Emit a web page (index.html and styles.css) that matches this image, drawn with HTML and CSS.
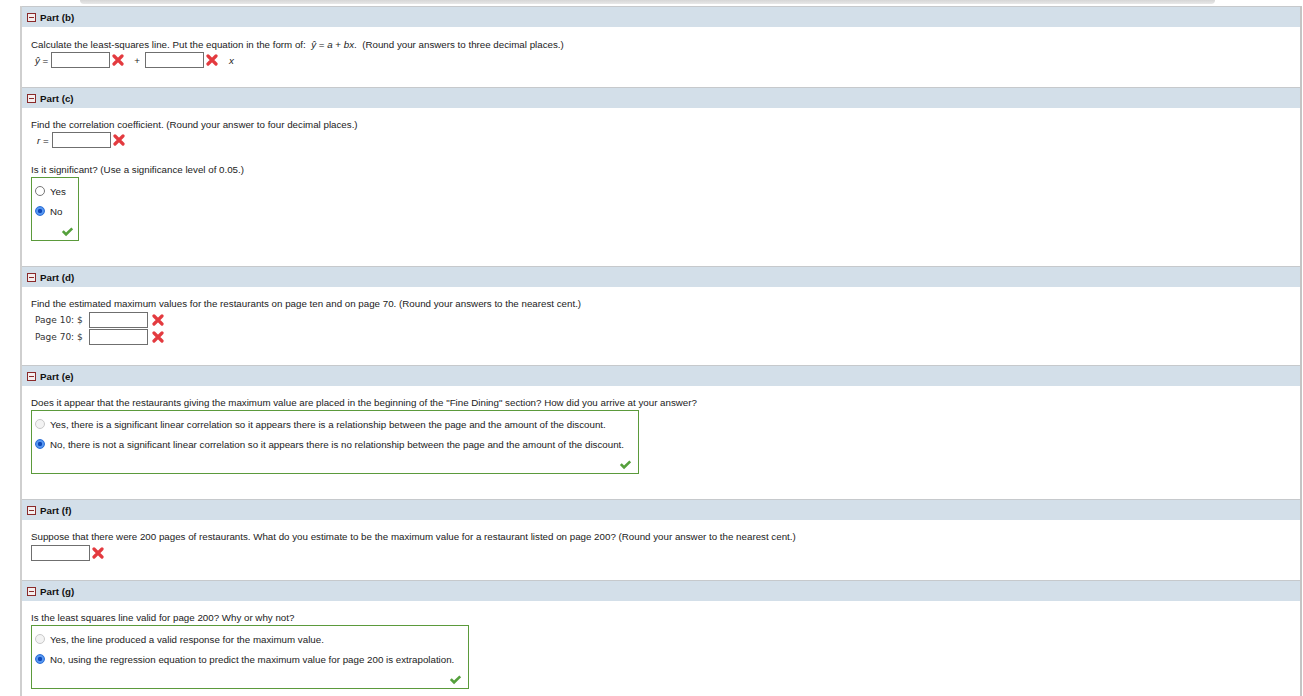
FILE: index.html
```html
<!DOCTYPE html>
<html lang="en">
<head>
    <meta charset="UTF-8">
    <title>Homework Parts</title>
    <link rel="stylesheet" href="styles.css">
</head>
<body>

    <div class="top-shadow"></div>

    <div class="parts">

        <!-- Part (b) -->
        <div class="part">
            <div class="part-header"><span class="toggle-box"></span>Part (b)</div>
            <div class="part-body first">
                <p class="question">Calculate the least-squares line. Put the equation in the form of:&nbsp; <i>ŷ</i> = <i>a</i> + <i>bx</i>.&nbsp; (Round your answers to three decimal places.)</p>
                <div class="answer-row indent-sm">
                    <span class="math-label"><i>ŷ</i> =</span>
                    <input type="text" class="answer-input">
                    <svg class="wrong" viewBox="0 0 12 12"><path d="M2 2 L10 10 M10 2 L2 10"/></svg>
                    <span class="plus">+</span>
                    <input type="text" class="answer-input">
                    <svg class="wrong" viewBox="0 0 12 12"><path d="M2 2 L10 10 M10 2 L2 10"/></svg>
                    <span class="var-x"><i>x</i></span>
                </div>
            </div>
        </div>

        <!-- Part (c) -->
        <div class="part">
            <div class="part-header"><span class="toggle-box"></span>Part (c)</div>
            <div class="part-body has-box">
                <p class="question">Find the correlation coefficient. (Round your answer to four decimal places.)</p>
                <div class="answer-row indent-md">
                    <span class="math-label"><i>r</i> =</span>
                    <input type="text" class="answer-input">
                    <svg class="wrong" viewBox="0 0 12 12"><path d="M2 2 L10 10 M10 2 L2 10"/></svg>
                </div>
                <p class="question spaced">Is it significant? (Use a significance level of 0.05.)</p>
                <div class="choice-box narrow">
                    <label class="choice"><input type="radio" name="sig" class="radio"> Yes</label>
                    <label class="choice"><input type="radio" name="sig" class="radio" checked> No</label>
                    <div class="check-row">
                        <svg class="right" viewBox="0 0 14 11"><path d="M0.8 5.6 L2.9 3.6 L5.4 6 L11.2 0.6 L13.2 2.6 L5.4 10.2 Z"/></svg>
                    </div>
                </div>
            </div>
        </div>

        <!-- Part (d) -->
        <div class="part">
            <div class="part-header"><span class="toggle-box"></span>Part (d)</div>
            <div class="part-body">
                <p class="question">Find the estimated maximum values for the restaurants on page ten and on page 70. (Round your answers to the nearest cent.)</p>
                <div class="answer-row indent-sm page-row">
                    <span class="page-label">Page 10: $</span>
                    <input type="text" class="answer-input">
                    <svg class="wrong wide-gap" viewBox="0 0 12 12"><path d="M2 2 L10 10 M10 2 L2 10"/></svg>
                </div>
                <div class="answer-row indent-sm page-row">
                    <span class="page-label">Page 70: $</span>
                    <input type="text" class="answer-input">
                    <svg class="wrong wide-gap" viewBox="0 0 12 12"><path d="M2 2 L10 10 M10 2 L2 10"/></svg>
                </div>
            </div>
        </div>

        <!-- Part (e) -->
        <div class="part">
            <div class="part-header"><span class="toggle-box"></span>Part (e)</div>
            <div class="part-body has-box">
                <p class="question">Does it appear that the restaurants giving the maximum value are placed in the beginning of the "Fine Dining" section? How did you arrive at your answer?</p>
                <div class="choice-box">
                    <label class="choice"><input type="radio" name="fine" class="radio" disabled> Yes, there is a significant linear correlation so it appears there is a relationship between the page and the amount of the discount.</label>
                    <label class="choice"><input type="radio" name="fine" class="radio" checked> No, there is not a significant linear correlation so it appears there is no relationship between the page and the amount of the discount.</label>
                    <div class="check-row">
                        <svg class="right" viewBox="0 0 14 11"><path d="M0.8 5.6 L2.9 3.6 L5.4 6 L11.2 0.6 L13.2 2.6 L5.4 10.2 Z"/></svg>
                    </div>
                </div>
            </div>
        </div>

        <!-- Part (f) -->
        <div class="part">
            <div class="part-header"><span class="toggle-box"></span>Part (f)</div>
            <div class="part-body short">
                <p class="question">Suppose that there were 200 pages of restaurants. What do you estimate to be the maximum value for a restaurant listed on page 200? (Round your answer to the nearest cent.)</p>
                <div class="answer-row page-row">
                    <input type="text" class="answer-input">
                    <svg class="wrong" viewBox="0 0 12 12"><path d="M2 2 L10 10 M10 2 L2 10"/></svg>
                </div>
            </div>
        </div>

        <!-- Part (g) -->
        <div class="part">
            <div class="part-header"><span class="toggle-box"></span>Part (g)</div>
            <div class="part-body has-box">
                <p class="question">Is the least squares line valid for page 200? Why or why not?</p>
                <div class="choice-box">
                    <label class="choice"><input type="radio" name="valid" class="radio" disabled> Yes, the line produced a valid response for the maximum value.</label>
                    <label class="choice"><input type="radio" name="valid" class="radio" checked> No, using the regression equation to predict the maximum value for page 200 is extrapolation.</label>
                    <div class="check-row">
                        <svg class="right" viewBox="0 0 14 11"><path d="M0.8 5.6 L2.9 3.6 L5.4 6 L11.2 0.6 L13.2 2.6 L5.4 10.2 Z"/></svg>
                    </div>
                </div>
            </div>
        </div>

    </div>

</body>
</html>
```

FILE: styles.css
```css
* {
    margin: 0;
    padding: 0;
    box-sizing: border-box;
}

body {
    font-family: 'Liberation Sans', Arial, sans-serif;
    font-size: 9.75px;
    color: #222;
    background-color: white;
    padding: 0 1px 0 20px;
    overflow: hidden;
}

.top-shadow {
    width: 1135px;
    height: 4px;
    margin: 0 0 2px 60px;
    background: linear-gradient(#d6d6d6, #e8e8e8);
    border-radius: 0 0 8px 8px;
}

.parts {
    border-left: 2px solid #cfcfcf;
    border-right: 2px solid #c4c4c4;
}

.part-header {
    display: flex;
    align-items: center;
    height: 21px;
    padding-left: 5px;
    border-top: 1px solid #c6c9cc;
    background-color: #d3dfe9;
    font-weight: bold;
    color: #111;
}

.toggle-box {
    position: relative;
    width: 9px;
    height: 9px;
    margin-right: 4px;
    border: 1px solid #8a2a2a;
    background-color: #f4eeee;
}

.toggle-box::after {
    content: "";
    position: absolute;
    left: 1px;
    right: 1px;
    top: 3px;
    height: 1px;
    background-color: #8a2a2a;
}

.part-body {
    padding: 11px 10px 20px 9px;
}

.part-body.first {
    padding-top: 12px;
    padding-bottom: 19px;
}

.part-body.short {
    padding-bottom: 19px;
}

.part-body.has-box {
    padding-bottom: 25px;
}

.question {
    line-height: 12px;
}

.question.spaced {
    margin-top: 16px;
}

.answer-row {
    display: flex;
    align-items: center;
    height: 16px;
    margin-top: 1px;
}

.page-row {
    margin-top: 2px;
}

.page-row + .page-row {
    margin-top: 1px;
}

.indent-sm {
    padding-left: 4px;
}

.indent-md {
    padding-left: 6px;
}

.math-label {
    margin-right: 3px;
    white-space: nowrap;
}

.page-label {
    font-family: 'DejaVu Sans', Verdana, sans-serif;
    font-size: 9px;
    color: #333;
    width: 54px;
    white-space: nowrap;
}

.answer-input {
    width: 59px;
    height: 16px;
    border: 1px solid #6f6f6f;
    background-color: white;
    outline: none;
}

.wrong {
    width: 12px;
    height: 12px;
    margin-left: 2px;
    fill: none;
    stroke: #e33a3f;
    stroke-width: 3.2;
    stroke-linecap: round;
}

.wrong.wide-gap {
    margin-left: 4px;
}

.plus {
    margin: 0 5px 0 10px;
}

.var-x {
    margin-left: 11px;
}

.choice-box {
    display: inline-block;
    margin-top: 1px;
    padding: 3px 14px 0 3px;
    height: 64px;
    border: 1px solid #5b9a3b;
}

.choice-box.narrow {
    padding-right: 12px;
}

.choice {
    display: flex;
    align-items: center;
    height: 20px;
    white-space: nowrap;
}

.radio {
    appearance: none;
    -webkit-appearance: none;
    width: 10px;
    height: 10px;
    margin-right: 5px;
    border: 1px solid #777;
    border-radius: 50%;
    background-color: white;
}

.radio:disabled {
    border-color: #c9c9c9;
    background-color: #f3f3f3;
}

.radio:checked {
    border-color: #2c6fd6;
    background: radial-gradient(circle, #0e48b8 0, #0e48b8 1.8px, #5c9bf2 2.6px, #3d82ea 100%);
}

.check-row {
    position: relative;
    height: 19px;
}

.right {
    position: absolute;
    right: -8px;
    top: 6px;
    width: 13px;
    height: 10px;
    fill: #55a03c;
}
```
